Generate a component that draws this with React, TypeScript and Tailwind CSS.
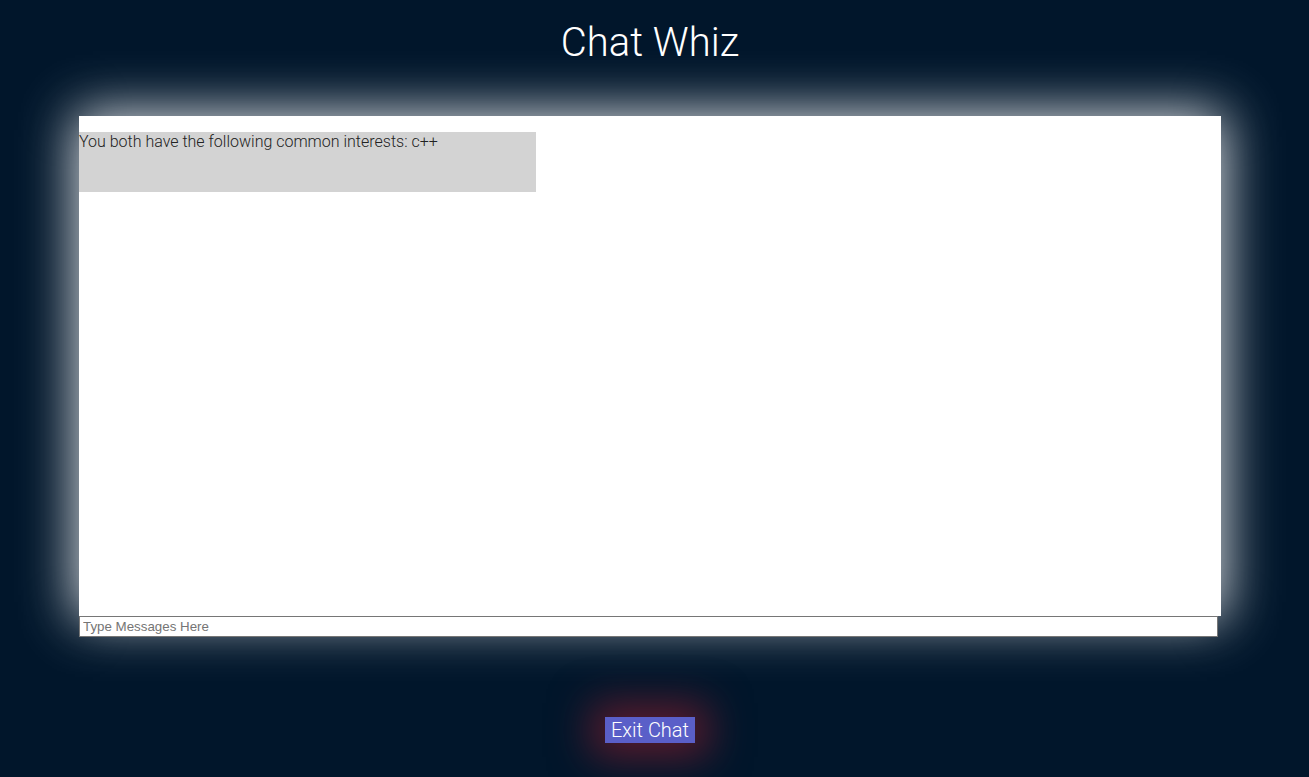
import React from "react";

export default function App() {
  return (
    <div className="min-h-[777px] w-full bg-[#01162b]" style={{ fontFamily: "Roboto, 'Liberation Sans', sans-serif" }}>
      <div className="w-[1300px] flex flex-col items-center">
        <h1 className="mt-[19px] text-[40px] leading-[48px] font-light text-white">Chat Whiz</h1>
        <div className="mt-[49px] w-[1142px] flex flex-col">
          <div className="h-[500px] bg-white shadow-[0_0_50px_4px_rgba(255,255,255,0.85)] pt-4">
            <div className="w-[457px] h-[60px] bg-[#d3d3d3] text-[16px] leading-[19px] font-light text-[#222]">
              You both have the following common interests: c++
            </div>
          </div>
          <input
            className="w-[1139px] h-[21px] border border-[#767676] bg-white px-[3px] text-[13.33px] text-black placeholder:text-[#757575] outline-none"
            style={{ fontFamily: "'Liberation Sans', Arial, sans-serif" }}
            placeholder="Type Messages Here"
          />
        </div>
        <button className="mt-[80px] w-[90px] h-[26px] bg-[#5a5fc8] text-white text-[20px] leading-[26px] font-light shadow-[0_0_40px_14px_rgba(130,30,45,0.7)]">
          Exit Chat
        </button>
      </div>
    </div>
  );
}
